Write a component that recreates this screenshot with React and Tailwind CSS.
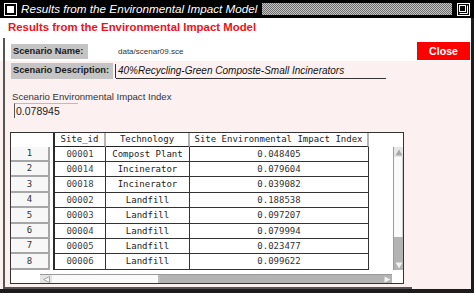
import React from "react";

const rows = [
  { n: "1", id: "00001", tech: "Compost Plant", v: "0.048405", h: "h-[15px]" },
  { n: "2", id: "00014", tech: "Incinerator", v: "0.079604", h: "h-[15px]" },
  { n: "3", id: "00018", tech: "Incinerator", v: "0.039082", h: "h-[16px]" },
  { n: "4", id: "00002", tech: "Landfill", v: "0.188538", h: "h-[15px]" },
  { n: "5", id: "00003", tech: "Landfill", v: "0.097207", h: "h-[16px]" },
  { n: "6", id: "00004", tech: "Landfill", v: "0.079994", h: "h-[15px]" },
  { n: "7", id: "00005", tech: "Landfill", v: "0.023477", h: "h-[15px]" },
  { n: "8", id: "00006", tech: "Landfill", v: "0.099622", h: "h-[16px]" },
];

function WinIcon() {
  return (
    <svg width="13" height="13" viewBox="0 0 13 13" className="shrink-0">
      <rect x="0" y="0" width="13" height="13" fill="#fff" />
      <rect x="1" y="1" width="11" height="11" fill="#000" />
      <rect x="3" y="3" width="7" height="7" fill="#fff" />
    </svg>
  );
}

function ResizeIcon() {
  return (
    <svg width="13" height="13" viewBox="0 0 13 13" className="shrink-0">
      <rect x="0.5" y="0.5" width="12" height="12" fill="#000" stroke="#fff" />
      <rect x="2.5" y="2.5" width="6" height="6" fill="none" stroke="#fff" />
      <path d="M10.5 2.5 V10.5 H2.5" fill="none" stroke="#fff" />
    </svg>
  );
}

function VScroll() {
  return (
    <div className="w-[10px] flex flex-col border-l border-[#9a9a9a] bg-[#b3b3b3]">
      <div className="h-[10px] bg-[#e6e6e6] flex items-center justify-center">
        <svg width="8" height="7" viewBox="0 0 8 7">
          <path d="M4 0.5 L7.5 6.5 H0.5 Z" fill="#a8a8a8" />
        </svg>
      </div>
      <div className="h-[80px] bg-[#fafafa] border-r border-[#d0d0d0]" />
      <div className="h-[24px] bg-[#b3b3b3]" />
      <div className="h-[9px] bg-[#b3b3b3] flex items-center justify-center">
        <svg width="8" height="7" viewBox="0 0 8 7">
          <path d="M0.5 0.5 H7.5 L4 6.5 Z" fill="#f2f2f2" />
        </svg>
      </div>
    </div>
  );
}

function HScroll() {
  return (
    <div className="flex h-[9px] mt-[4px] border-t border-[#9a9a9a]">
      <div className="w-[12px] bg-[#e4e4e4] flex items-center justify-center">
        <svg width="7" height="7" viewBox="0 0 7 7">
          <path d="M0.5 3.5 L6.5 0.5 V6.5 Z" fill="#f4f4f4" stroke="#a8a8a8" />
        </svg>
      </div>
      <div className="w-[108px] bg-[#fafafa] border-r-2 border-[#bdbdbd]" />
      <div className="flex-1 bg-[#b3b3b3]" />
      <div className="w-[9px] bg-[#b3b3b3] flex items-center justify-center">
        <svg width="7" height="7" viewBox="0 0 7 7">
          <path d="M0.5 0.5 L6.5 3.5 L0.5 6.5 Z" fill="#f2f2f2" />
        </svg>
      </div>
    </div>
  );
}

function Table() {
  return (
    <div className="ml-[5px] w-[394px] h-[152px] border border-[#333] bg-white flex flex-col font-['DejaVu_Sans_Mono',monospace] text-[9px] text-[#222] leading-none">
      {/* header */}
      <div className="flex h-[14px]">
        <div className="w-[42px]" />
        <div className="w-[2px] bg-[#2a2a2a]" />
        <div className="w-[51px] border-r-2 border-b border-r-[#b5b5b5] border-b-[#222] flex items-center justify-center">Site_id</div>
        <div className="w-[84px] border-r-2 border-b border-r-[#b5b5b5] border-b-[#222] flex items-center justify-center">Technology</div>
        <div className="w-[179px] border-r-2 border-b border-r-[#b5b5b5] border-b-[#222] flex items-center justify-center">Site Environmental Impact Index</div>
        <div className="flex-1" />
      </div>
      {/* body */}
      <div className="flex h-[123px]">
        <div className="w-[42px] flex flex-col">
          {rows.map((r) => (
            <div key={r.n} className={`${r.h} flex`}>
              <div className="w-[39px] bg-[#f7f7f7] border-r-2 border-b-2 border-[#a6a6a6] flex items-center justify-center text-[#333]">
                {r.n}
              </div>
            </div>
          ))}
        </div>
        <div className="w-[2px] bg-[#2a2a2a]" />
        <div className="w-[314px] flex flex-col">
          {rows.map((r) => (
            <div key={r.n} className={`${r.h} flex border-b border-[#333]`}>
              <div className="w-[51px] border-r border-[#333] flex items-center justify-center text-[#444]">{r.id}</div>
              <div className="w-[84px] border-r border-[#333] flex items-center justify-center">{r.tech}</div>
              <div className="w-[179px] border-r border-[#333] flex items-center justify-center text-[#333]">{r.v}</div>
            </div>
          ))}
        </div>
        <div className="w-[24px]" />
        <VScroll />
      </div>
      {/* footer */}
      <div className="flex flex-1">
        <div className="w-[29px]" />
        <div className="w-[352px]">
          <HScroll />
        </div>
        <div className="flex-1" />
      </div>
    </div>
  );
}

export default function App() {
  return (
    <div className="w-[474px] h-[293px] bg-black flex flex-col overflow-hidden font-['Liberation_Sans',Arial,sans-serif]">
      {/* title bar */}
      <div className="h-[18px] flex items-center pl-[4px] pr-[4px] shrink-0">
        <WinIcon />
        <div className="ml-[4px] text-white italic text-[11.7px] leading-none whitespace-nowrap">
          Results from the Environmental Impact Model
        </div>
        <div className="ml-[5px] flex-1 h-[12px] bg-[repeating-conic-gradient(#6e6e6e_0_25%,#c4c4c4_0_50%)] bg-[length:2px_2px]" />
        <div className="ml-[5px]">
          <ResizeIcon />
        </div>
      </div>
      {/* body */}
      <div className="flex-1 flex bg-[#1c1c1c] pr-[3px] pb-[4px]">
        <div className="flex-1 flex flex-col bg-[linear-gradient(#ffffff_0_43px,#fdf0f0_43px)]">
          <div className="h-[20px] pl-[8px] flex items-center text-[#f01018] font-bold text-[11.4px] leading-none whitespace-nowrap">
            Results from the Environmental Impact Model
          </div>
          <div className="flex flex-1">
            <div className="w-[409px] ml-[3px] border-l-2 border-b-2 border-[#555] flex flex-col">
              {/* Scenario name */}
              <div className="mt-[6px] h-[15px] flex items-center">
                <div className="ml-[6px] w-[77px] h-full bg-[#c4c4c4] flex items-center pl-[2px] font-bold text-[9.3px] text-[#1a1a1a] leading-none">
                  Scenario Name:
                </div>
                <div className="ml-[30px] text-[8px] text-[#333] leading-none">data/scenar09.sce</div>
              </div>
              {/* description */}
              <div className="mt-[4px] h-[16px] flex items-center">
                <div className="ml-[6px] w-[102px] h-full bg-[#c4c4c4] flex items-center pl-[2px] font-bold text-[9.3px] text-[#1a1a1a] leading-none">
                  Scenario Description:
                </div>
                <div className="ml-[2px] w-[1px] h-[14px] bg-[#333]" />
                <div className="w-[270px] h-full border-b border-[#333] flex items-center pl-[2px] italic text-[10px] text-[#111] leading-none whitespace-nowrap">
                  40%Recycling-Green Composte-Small Incinerators
                </div>
              </div>
              {/* index */}
              <div className="mt-[12px] h-[11px] ml-[7px] text-[9.6px] text-[#333] leading-none flex items-center whitespace-nowrap">
                Scenario Environmental Impact Index
              </div>
              <div className="mt-[1px] ml-[9px] w-[64px] h-[15px] border-l border-t border-l-[#555] border-t-[#bbb] flex items-center pl-[1px] text-[10.5px] text-[#222] leading-none">
                0.078945
              </div>
              <div className="mt-[14px]">
                <Table />
              </div>
            </div>
            <div className="flex-1 pl-[5px] pt-[4px]">
              <div className="w-[53px] h-[18px] bg-[#ff0000] flex items-center justify-center text-white font-bold text-[10.6px] leading-none">
                Close
              </div>
            </div>
          </div>
        </div>
      </div>
    </div>
  );
}
